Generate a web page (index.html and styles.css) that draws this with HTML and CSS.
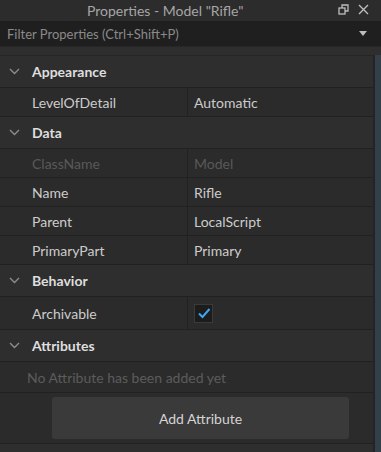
FILE: index.html
```html
<!DOCTYPE html>
<html lang="en">
<head>
    <meta charset="UTF-8">
    <title>Properties</title>
    <link rel="stylesheet" href="styles.css">
</head>
<body>
    <div class="window">
        <div class="title-bar">
            <span class="title">Properties - Model "Rifle"</span>
            <div class="title-icons">
                <svg width="11" height="11" viewBox="0 0 11 11">
                    <rect x="1" y="4" width="6" height="6" fill="none" stroke="#bdbdbd" stroke-width="1.3"/>
                    <path d="M4 4V1h6v6H7" fill="none" stroke="#bdbdbd" stroke-width="1.3"/>
                </svg>
                <svg width="11" height="11" viewBox="0 0 11 11">
                    <path d="M1 1l9 9M10 1l-9 9" stroke="#bdbdbd" stroke-width="1.4"/>
                </svg>
            </div>
        </div>

        <div class="filter-bar">
            <span>Filter Properties (Ctrl+Shift+P)</span>
            <span class="filter-arrow"></span>
        </div>

        <div class="body">
            <div class="panel">
                <div class="section-head">
                    <svg class="chevron" width="11" height="7" viewBox="0 0 11 7"><path d="M1 1l4.5 4.5L10 1" fill="none" stroke="#8c8c8c" stroke-width="1.4"/></svg>
                    Appearance
                </div>
                <div class="prop-row">
                    <div class="prop-name">LevelOfDetail</div>
                    <div class="prop-value">Automatic</div>
                </div>

                <div class="section-head">
                    <svg class="chevron" width="11" height="7" viewBox="0 0 11 7"><path d="M1 1l4.5 4.5L10 1" fill="none" stroke="#8c8c8c" stroke-width="1.4"/></svg>
                    Data
                </div>
                <div class="prop-row disabled">
                    <div class="prop-name">ClassName</div>
                    <div class="prop-value">Model</div>
                </div>
                <div class="prop-row">
                    <div class="prop-name">Name</div>
                    <div class="prop-value">Rifle</div>
                </div>
                <div class="prop-row">
                    <div class="prop-name">Parent</div>
                    <div class="prop-value">LocalScript</div>
                </div>
                <div class="prop-row">
                    <div class="prop-name">PrimaryPart</div>
                    <div class="prop-value">Primary</div>
                </div>

                <div class="section-head">
                    <svg class="chevron" width="11" height="7" viewBox="0 0 11 7"><path d="M1 1l4.5 4.5L10 1" fill="none" stroke="#8c8c8c" stroke-width="1.4"/></svg>
                    Behavior
                </div>
                <div class="prop-row tall">
                    <div class="prop-name">Archivable</div>
                    <div class="prop-value">
                        <span class="checkbox">
                            <svg width="14" height="12" viewBox="0 0 14 12"><path d="M2 6.5l3.5 3.5L12.5 2" fill="none" stroke="#3ea6f0" stroke-width="2"/></svg>
                        </span>
                    </div>
                </div>

                <div class="section-head">
                    <svg class="chevron" width="11" height="7" viewBox="0 0 11 7"><path d="M1 1l4.5 4.5L10 1" fill="none" stroke="#8c8c8c" stroke-width="1.4"/></svg>
                    Attributes
                </div>
                <div class="empty-note">No Attribute has been added yet</div>
                <div class="button-row">
                    <button class="add-btn">Add Attribute</button>
                </div>
                <div class="panel-foot"></div>
            </div>
            <div class="scroll-strip"></div>
        </div>
    </div>
</body>
</html>
```

FILE: styles.css
```css
:root {
    --bg: #2e2e2e;
    --row: #2b2b2b;
    --line: #212121;
    --text: #cccccc;
    --muted: #8a8a8a;
}

body {
    margin: 0;
    background: var(--bg);
    font-family: 'Lato', 'Open Sans', sans-serif;
    font-size: 14px;
    overflow: hidden;
}

.window {
    width: 381px;
    height: 452px;
    display: flex;
    flex-direction: column;
}

.title-bar {
    height: 21px;
    background: #2c2c2c;
    display: flex;
    align-items: center;
    padding-left: 87px;
    position: relative;
}

.title {
    color: #a6a6a6;
    font-size: 14px;
}

.title-icons {
    position: absolute;
    right: 12px;
    top: 4px;
    display: flex;
    gap: 9px;
}

.filter-bar {
    height: 25px;
    background: #1f1f1f;
    color: var(--muted);
    font-size: 13px;
    display: flex;
    align-items: center;
    justify-content: space-between;
    padding: 0 14px 0 7px;
    border-bottom: 1px solid #262626;
}

.filter-arrow {
    width: 0;
    height: 0;
    border-left: 4px solid transparent;
    border-right: 4px solid transparent;
    border-top: 5px solid #bdbdbd;
}

.body {
    flex: 1;
    display: flex;
    padding-top: 8px;
}

.panel {
    flex: 1;
    display: flex;
    flex-direction: column;
    border-right: 2px solid #242424;
    border-top: 1px solid #262626;
}

.section-head {
    height: 31px;
    background: var(--bg);
    color: #dedede;
    font-weight: bold;
    display: flex;
    align-items: center;
    border-bottom: 1px solid var(--line);
}

.chevron {
    margin: 0 12px 0 9px;
}

.prop-row {
    height: 28px;
    background: var(--row);
    display: flex;
    border-bottom: 1px solid var(--line);
    color: var(--text);
}

.prop-row.tall {
    height: 32px;
}

.prop-row.disabled {
    color: #595959;
}

.prop-name {
    width: 155px;
    padding-left: 32px;
    display: flex;
    align-items: center;
    border-right: 1px solid var(--line);
}

.prop-value {
    flex: 1;
    padding-left: 6px;
    display: flex;
    align-items: center;
}

.checkbox {
    width: 17px;
    height: 17px;
    background: #1c1c1c;
    border: 1px solid #3a3a3a;
    display: flex;
    align-items: center;
    justify-content: center;
}

.empty-note {
    height: 30px;
    background: var(--row);
    color: #5c5c5c;
    padding-left: 27px;
    display: flex;
    align-items: center;
    border-bottom: 1px solid var(--line);
}

.button-row {
    height: 50px;
    background: var(--row);
    display: flex;
    align-items: center;
    padding-left: 52px;
    border-bottom: 1px solid var(--line);
}

.add-btn {
    width: 297px;
    height: 42px;
    background: #3a3a3a;
    border: none;
    border-radius: 3px;
    color: #d4d4d4;
    font-family: inherit;
    font-size: 14px;
}

.panel-foot {
    flex: 1;
    background: var(--bg);
}

.scroll-strip {
    width: 6px;
    background: #33404a;
}
```
